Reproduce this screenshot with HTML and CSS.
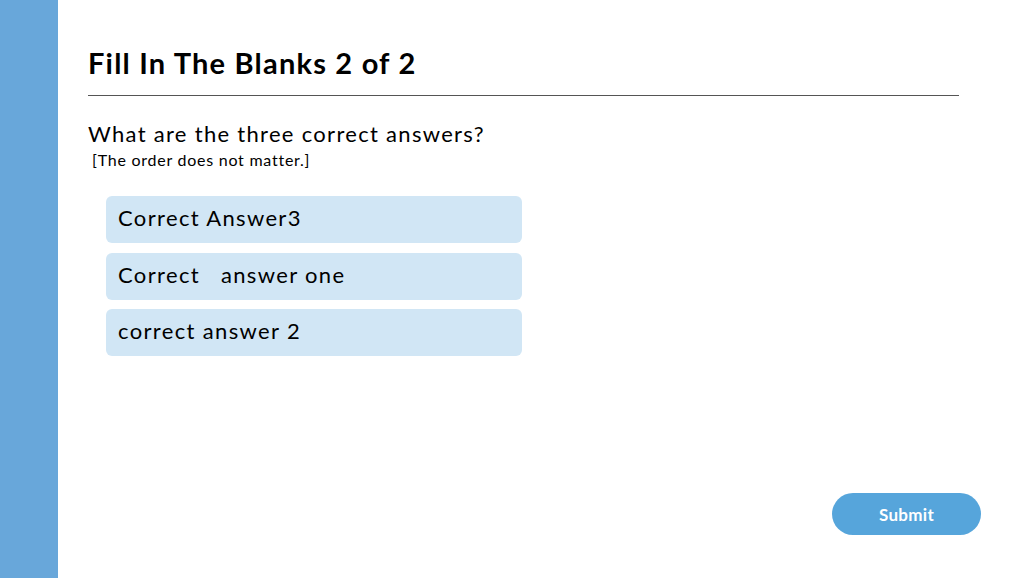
FILE: index.html
```html
<!DOCTYPE html>
<html>
<head>
<meta charset="utf-8">
<link rel="stylesheet" href="styles.css">
</head>
<body>
<div class="app">
  <aside class="sidebar"></aside>
  <main class="content">
    <h1 class="title">Fill In The Blanks 2 of 2</h1>
    <hr class="rule">
    <p class="question">What are the three correct answers?</p>
    <p class="hint">[The order does not matter.]</p>
    <ul class="answers">
      <li class="answer">Correct Answer3</li>
      <li class="answer">Correct&nbsp;&nbsp;&nbsp;answer one</li>
      <li class="answer">correct answer 2</li>
    </ul>
    <div class="actions">
      <button class="submit">Submit</button>
    </div>
  </main>
</div>
</body>
</html>
```
FILE: styles.css
```css
html, body {
  margin: 0;
  padding: 0;
  background: #ffffff;
}
body {
  font-family: "Lato", "Open Sans", sans-serif;
  color: #000;
}
.app {
  display: flex;
  width: 1028px;
  height: 578px;
}
.sidebar {
  width: 58px;
  flex: none;
  background: #68a7da;
}
.content {
  flex: 1;
  padding: 0 69px 0 30px;
  display: flex;
  flex-direction: column;
}
.title {
  margin: 45px 0 0 0;
  font-size: 29px;
  font-weight: 700;
  line-height: 36px;
  letter-spacing: 1.2px;
}
.rule {
  margin: 14px 0 0 0;
  border: none;
  border-top: 1px solid #555;
  height: 0;
}
.question {
  margin: 24px 0 0 0;
  font-size: 22px;
  line-height: 28px;
  letter-spacing: 1.3px;
}
.hint {
  margin: 2px 0 0 4px;
  font-size: 16px;
  line-height: 20px;
  letter-spacing: 0.75px;
}
.answers {
  list-style: none;
  margin: 26px 0 0 18px;
  padding: 0;
  display: flex;
  flex-direction: column;
  gap: 9.5px;
}
.answer {
  width: 416px;
  height: 47px;
  box-sizing: border-box;
  padding: 0 12px;
  background: #d1e6f5;
  border-radius: 6px;
  font-size: 22px;
  line-height: 43px;
  letter-spacing: 1.35px;
}
.actions {
  margin-top: auto;
  margin-bottom: 43px;
  display: flex;
  justify-content: flex-end;
  margin-right: -22px;
}
.submit {
  width: 149px;
  height: 42px;
  border: none;
  border-radius: 21px;
  background: #56a5db;
  color: #fff;
  font-family: "Lato", sans-serif;
  font-size: 17px;
  font-weight: 700;
  letter-spacing: 0.3px;
}
```
